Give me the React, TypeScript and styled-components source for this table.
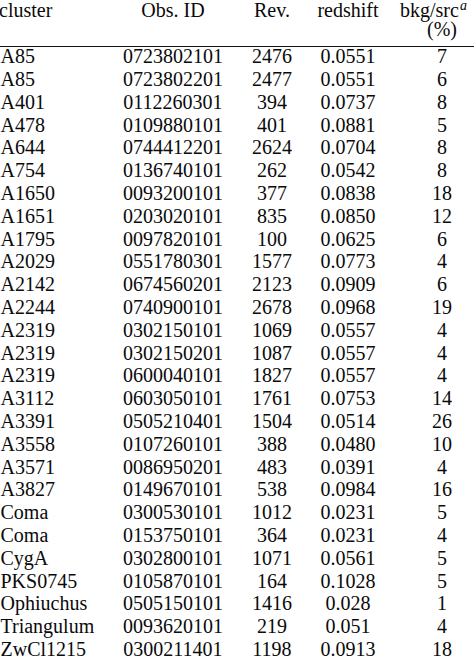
import React from "react";
import styled, { createGlobalStyle } from "styled-components";

const GlobalStyle = createGlobalStyle`
  html, body {
    margin: 0;
    padding: 0;
    background: #ffffff;
    overflow: hidden;
  }
  body {
    font-family: "Liberation Serif", "Times New Roman", serif;
    color: #0a0a0a;
  }
`;

const Page = styled.div`
  width: 474px;
  height: 662px;
  overflow: hidden;
`;

const Table = styled.div`
  width: 505px;
  font-size: 20px;
`;

const Columns = `
  display: grid;
  grid-template-columns: 119px 108px 90px 62px 126px;
`;

const HeaderRow = styled.div`
  ${Columns}
  height: 47.2px;
  padding-top: 0.5px;
  box-sizing: border-box;
  border-bottom: 1px solid #111;
  line-height: 19.5px;
`;

const Row = styled.div`
  ${Columns}
  height: 22.8px;
  line-height: 18px;
`;

const Cell = styled.div<{ $align?: "left" | "center" }>`
  display: flex;
  flex-direction: column;
  align-items: ${(p) => (p.$align === "left" ? "flex-start" : "center")};
  white-space: nowrap;
`;

const ClusterHead = styled.span`
  margin-left: -1px;
`;

const ClusterName = styled.span`
  margin-left: 0.5px;
`;

const HeadLineLeft = styled.span`
  align-self: flex-start;
  padding-left: 21px;
`;

const Sup = styled.sup`
  font-style: italic;
  font-size: 14px;
  line-height: 0;
  vertical-align: 0;
  position: relative;
  top: -7px;
  margin-left: 1px;
`;

type Entry = [string, string, string, string, string];

const rows: Entry[] = [
  ["A85", "0723802101", "2476", "0.0551", "7"],
  ["A85", "0723802201", "2477", "0.0551", "6"],
  ["A401", "0112260301", "394", "0.0737", "8"],
  ["A478", "0109880101", "401", "0.0881", "5"],
  ["A644", "0744412201", "2624", "0.0704", "8"],
  ["A754", "0136740101", "262", "0.0542", "8"],
  ["A1650", "0093200101", "377", "0.0838", "18"],
  ["A1651", "0203020101", "835", "0.0850", "12"],
  ["A1795", "0097820101", "100", "0.0625", "6"],
  ["A2029", "0551780301", "1577", "0.0773", "4"],
  ["A2142", "0674560201", "2123", "0.0909", "6"],
  ["A2244", "0740900101", "2678", "0.0968", "19"],
  ["A2319", "0302150101", "1069", "0.0557", "4"],
  ["A2319", "0302150201", "1087", "0.0557", "4"],
  ["A2319", "0600040101", "1827", "0.0557", "4"],
  ["A3112", "0603050101", "1761", "0.0753", "14"],
  ["A3391", "0505210401", "1504", "0.0514", "26"],
  ["A3558", "0107260101", "388", "0.0480", "10"],
  ["A3571", "0086950201", "483", "0.0391", "4"],
  ["A3827", "0149670101", "538", "0.0984", "16"],
  ["Coma", "0300530101", "1012", "0.0231", "5"],
  ["Coma", "0153750101", "364", "0.0231", "4"],
  ["CygA", "0302800101", "1071", "0.0561", "5"],
  ["PKS0745", "0105870101", "164", "0.1028", "5"],
  ["Ophiuchus", "0505150101", "1416", "0.028", "1"],
  ["Triangulum", "0093620101", "219", "0.051", "4"],
  ["ZwCl1215", "0300211401", "1198", "0.0913", "18"],
];

export default function App() {
  return (
    <Page>
      <GlobalStyle />
      <Table>
        <HeaderRow>
          <Cell $align="left">
            <ClusterHead>cluster</ClusterHead>
          </Cell>
          <Cell>Obs. ID</Cell>
          <Cell>Rev.</Cell>
          <Cell>redshift</Cell>
          <Cell>
            <HeadLineLeft>
              bkg/src<Sup>a</Sup>
            </HeadLineLeft>
            <span>(%)</span>
          </Cell>
        </HeaderRow>
        {rows.map((r, i) => (
          <Row key={i}>
            <Cell $align="left">
              <ClusterName>{r[0]}</ClusterName>
            </Cell>
            <Cell>{r[1]}</Cell>
            <Cell>{r[2]}</Cell>
            <Cell>{r[3]}</Cell>
            <Cell>{r[4]}</Cell>
          </Row>
        ))}
      </Table>
    </Page>
  );
}
